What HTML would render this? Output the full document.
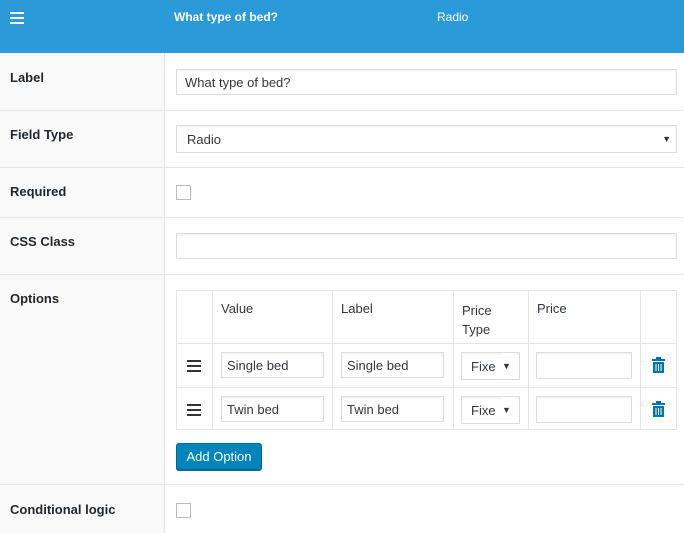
<html><head><style>
body{margin:0;width:684px;height:533px;overflow:hidden;background:#fff;font-family:"Liberation Sans",Arial,sans-serif;font-size:13px;color:#23282d;position:relative}
.a{position:absolute}
.hdr{left:0;top:0;width:684px;height:53px;background:#2a9ad8;color:#fff}
.lc{left:0;top:53px;width:164px;height:480px;background:#f9f9f9;border-right:1px solid #e5e5e5}
.hl{left:0;width:684px;height:1px;background:#e5e5e5}
.lb{left:10px;font-weight:bold;font-size:13px}
.in{border:1px solid #ddd;background:#fff;box-sizing:border-box;box-shadow:inset 0 1px 2px rgba(0,0,0,.07);font-size:13px;color:#32373c;padding-left:8px;display:flex;align-items:center}
.cb{width:15px;height:15px;border:1px solid #bbb;box-sizing:border-box;background:#fff}
.vl{width:1px;background:#e5e5e5}
.th{font-size:13px;color:#32373c}
</style></head><body>
<div class="a hdr">
 <div class="a" style="left:10px;top:12px;width:14px">
  <div style="height:2px;background:#fff;margin-bottom:3px"></div><div style="height:2px;background:#fff;margin-bottom:3px"></div><div style="height:2px;background:#fff"></div></div>
 <div class="a" style="left:174px;top:10px;font-weight:bold;font-size:12px">What type of bed?</div>
 <div class="a" style="left:437px;top:10px;font-size:12px">Radio</div>
</div>
<div class="a lc"></div>
<div class="a hl" style="top:110px"></div>
<div class="a hl" style="top:167px"></div>
<div class="a hl" style="top:217px"></div>
<div class="a hl" style="top:274px"></div>
<div class="a hl" style="top:484px"></div>
<div class="a lb" style="top:70px">Label</div>
<div class="a lb" style="top:127px">Field Type</div>
<div class="a lb" style="top:184px">Required</div>
<div class="a lb" style="top:234px">CSS Class</div>
<div class="a lb" style="top:291px">Options</div>
<div class="a lb" style="top:502px">Conditional logic</div>
<div class="a in" style="left:176px;top:69px;width:501px;height:26px">What type of bed?</div>
<div class="a in" style="left:176px;top:125px;width:501px;height:28px;padding-left:10px">Radio<span style="position:absolute;right:5px;font-size:9px">▼</span></div>
<div class="a cb" style="left:176px;top:185px"></div>
<div class="a in" style="left:176px;top:233px;width:501px;height:26px"></div>
<div class="a" style="left:176px;top:290px;width:501px;height:140px;border:1px solid #e5e5e5;box-sizing:border-box"></div>
<div class="a" style="left:176px;top:343px;width:501px;height:1px;background:#e5e5e5"></div>
<div class="a" style="left:176px;top:387px;width:501px;height:1px;background:#e5e5e5"></div>
<div class="a vl" style="left:212px;top:290px;height:140px"></div>
<div class="a vl" style="left:332px;top:290px;height:140px"></div>
<div class="a vl" style="left:453px;top:290px;height:140px"></div>
<div class="a vl" style="left:528px;top:290px;height:140px"></div>
<div class="a vl" style="left:640px;top:290px;height:140px"></div>
<div class="a th" style="left:221px;top:301px">Value</div>
<div class="a th" style="left:341px;top:301px">Label</div>
<div class="a th" style="left:462px;top:301px;line-height:19px">Price<br>Type</div>
<div class="a th" style="left:537px;top:301px">Price</div>
<!-- row1 -->
<div class="a" style="left:187px;top:360px;width:14px"><div style="height:2px;background:#333;margin-bottom:3px"></div><div style="height:2px;background:#333;margin-bottom:3px"></div><div style="height:2px;background:#333"></div></div>
<div class="a in" style="left:221px;top:352px;width:103px;height:26px;padding-left:5px">Single bed</div>
<div class="a in" style="left:341px;top:352px;width:103px;height:26px;padding-left:5px">Single bed</div>
<div class="a in" style="left:461px;top:352px;width:59px;height:28px;padding-left:9px;overflow:hidden">Fixe<span style="position:absolute;right:3px;top:0;bottom:0;width:14px;background:#fff;font-size:9px;display:flex;align-items:center">▼</span></div>
<div class="a in" style="left:536px;top:352px;width:96px;height:27px"></div>
<svg class="a" style="left:652px;top:357px" width="13" height="16" viewBox="0 0 13 16"><rect x="0" y="2" width="13" height="2" fill="#0073aa"/><rect x="4" y="0" width="5" height="2" fill="#0073aa"/><path d="M1 5h11v11H1z" fill="#0073aa"/><path d="M4 7v7M6.5 7v7M9 7v7" stroke="#fff" stroke-width="1"/></svg>
<!-- row2 -->
<div class="a" style="left:187px;top:404px;width:14px"><div style="height:2px;background:#333;margin-bottom:3px"></div><div style="height:2px;background:#333;margin-bottom:3px"></div><div style="height:2px;background:#333"></div></div>
<div class="a in" style="left:221px;top:396px;width:103px;height:26px;padding-left:5px">Twin bed</div>
<div class="a in" style="left:341px;top:396px;width:103px;height:26px;padding-left:5px">Twin bed</div>
<div class="a in" style="left:461px;top:396px;width:59px;height:28px;padding-left:9px;overflow:hidden">Fixe<span style="position:absolute;right:3px;top:0;bottom:0;width:14px;background:#fff;font-size:9px;display:flex;align-items:center">▼</span></div>
<div class="a in" style="left:536px;top:396px;width:96px;height:27px"></div>
<svg class="a" style="left:652px;top:401px" width="13" height="16" viewBox="0 0 13 16"><rect x="0" y="2" width="13" height="2" fill="#0073aa"/><rect x="4" y="0" width="5" height="2" fill="#0073aa"/><path d="M1 5h11v11H1z" fill="#0073aa"/><path d="M4 7v7M6.5 7v7M9 7v7" stroke="#fff" stroke-width="1"/></svg>
<div class="a" style="left:176px;top:443px;width:86px;height:27px;background:#0085ba;border:1px solid #006799;box-sizing:border-box;border-radius:3px;color:#fff;font-size:13px;display:flex;align-items:center;justify-content:center;box-shadow:0 1px 0 #006799">Add Option</div>
<div class="a cb" style="left:176px;top:503px"></div>
</body></html>
